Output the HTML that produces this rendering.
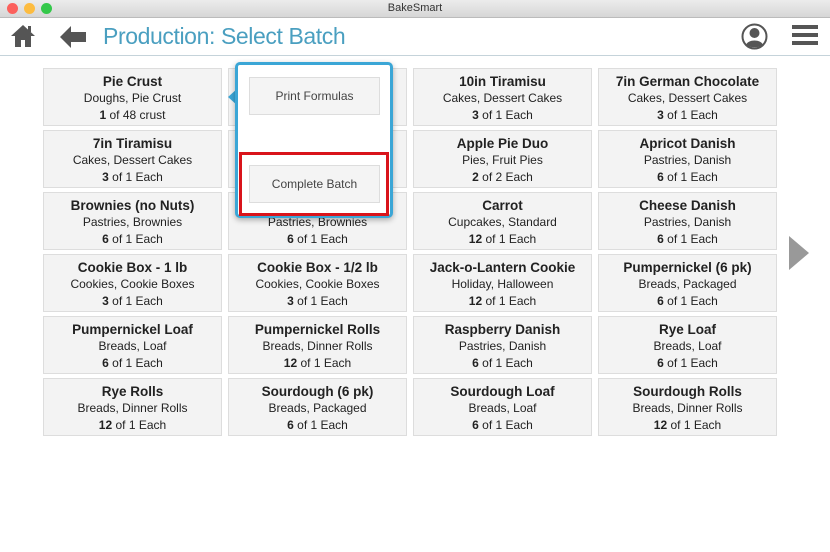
<!DOCTYPE html><html><head><style>
body{margin:0;width:830px;height:552px;background:#fff;font-family:"Liberation Sans",sans-serif;position:relative;overflow:hidden}
.tb{position:absolute;left:0;top:0;width:830px;height:17px;background:linear-gradient(#ececec,#d6d6d6);border-bottom:1px solid #bbb;text-align:center;font-size:11px;line-height:17px;color:#333}
.dot{position:absolute;top:3px;width:11px;height:11px;border-radius:50%}
.hdr{position:absolute;top:18px;left:0;width:830px;height:37px;border-bottom:1px solid #c5d3da}
.title{position:absolute;left:103px;top:5px;font-size:23px;color:#4a9fc0;letter-spacing:-0.4px}
.c{position:absolute;width:177px;height:56px;background:#f3f3f3;border:1px solid #ddd;text-align:center;color:#222;font-size:12px;line-height:17px}
.c b{display:block;font-size:13.5px;margin-top:4px;line-height:17px}
.pop{position:absolute;left:235px;top:62px;width:152px;height:150px;background:#fff;border:3px solid #3ba6d6;border-radius:5px;box-shadow:0 2px 6px rgba(0,0,0,.3)}
.btn{position:absolute;width:129px;height:36px;background:#f4f4f4;border:1px solid #ddd;font-size:12px;color:#444;text-align:center;line-height:36px}
</style></head><body>
<div class="tb">BakeSmart
<div class="dot" style="left:7px;background:#fc605c"></div><div class="dot" style="left:24px;background:#fdbc40"></div><div class="dot" style="left:41px;background:#34c84a"></div></div>
<div class="hdr">
<svg style="position:absolute;left:10px;top:6px" width="26" height="24" viewBox="0 0 26 24"><path d="M13 1L1 12h4v11h6v-7h4v7h6V12h4z" fill="#555"/><rect x="18" y="2" width="3" height="6" fill="#555"/></svg>
<svg style="position:absolute;left:60px;top:8px" width="26" height="22" viewBox="0 0 26 22"><path d="M0 11L11 0v6h15v10H11v6z" fill="#555"/></svg>
<div class="title">Production: Select Batch</div>
<svg style="position:absolute;left:741px;top:5px" width="27" height="27" viewBox="0 0 27 27"><circle cx="13.5" cy="13.5" r="12" fill="#fff" stroke="#555" stroke-width="2"/><circle cx="13.5" cy="10" r="5" fill="#555"/><path d="M5 22c2-6 15-6 17 0c-4 3-13 3-17 0z" fill="#555"/></svg>
<div style="position:absolute;left:792px;top:7px;width:26px;height:4px;background:#555;box-shadow:0 8px 0 #555,0 16px 0 #555"></div>
</div>
<svg style="position:absolute;left:789px;top:236px" width="20" height="34"><path d="M0 0L20 17L0 34z" fill="#999"/></svg>
<div class="c" style="left:43px;top:68px"><b>Pie Crust</b>Doughs, Pie Crust<br><strong>1</strong> of 48 crust</div>
<div class="c" style="left:228px;top:68px"></div>
<div class="c" style="left:413px;top:68px"><b>10in Tiramisu</b>Cakes, Dessert Cakes<br><strong>3</strong> of 1 Each</div>
<div class="c" style="left:598px;top:68px"><b>7in German Chocolate</b>Cakes, Dessert Cakes<br><strong>3</strong> of 1 Each</div>
<div class="c" style="left:43px;top:130px"><b>7in Tiramisu</b>Cakes, Dessert Cakes<br><strong>3</strong> of 1 Each</div>
<div class="c" style="left:228px;top:130px"></div>
<div class="c" style="left:413px;top:130px"><b>Apple Pie Duo</b>Pies, Fruit Pies<br><strong>2</strong> of 2 Each</div>
<div class="c" style="left:598px;top:130px"><b>Apricot Danish</b>Pastries, Danish<br><strong>6</strong> of 1 Each</div>
<div class="c" style="left:43px;top:192px"><b>Brownies (no Nuts)</b>Pastries, Brownies<br><strong>6</strong> of 1 Each</div>
<div class="c" style="left:228px;top:192px"><b>&nbsp;</b>Pastries, Brownies<br><strong>6</strong> of 1 Each</div>
<div class="c" style="left:413px;top:192px"><b>Carrot</b>Cupcakes, Standard<br><strong>12</strong> of 1 Each</div>
<div class="c" style="left:598px;top:192px"><b>Cheese Danish</b>Pastries, Danish<br><strong>6</strong> of 1 Each</div>
<div class="c" style="left:43px;top:254px"><b>Cookie Box - 1 lb</b>Cookies, Cookie Boxes<br><strong>3</strong> of 1 Each</div>
<div class="c" style="left:228px;top:254px"><b>Cookie Box - 1/2 lb</b>Cookies, Cookie Boxes<br><strong>3</strong> of 1 Each</div>
<div class="c" style="left:413px;top:254px"><b>Jack-o-Lantern Cookie</b>Holiday, Halloween<br><strong>12</strong> of 1 Each</div>
<div class="c" style="left:598px;top:254px"><b>Pumpernickel (6 pk)</b>Breads, Packaged<br><strong>6</strong> of 1 Each</div>
<div class="c" style="left:43px;top:316px"><b>Pumpernickel Loaf</b>Breads, Loaf<br><strong>6</strong> of 1 Each</div>
<div class="c" style="left:228px;top:316px"><b>Pumpernickel Rolls</b>Breads, Dinner Rolls<br><strong>12</strong> of 1 Each</div>
<div class="c" style="left:413px;top:316px"><b>Raspberry Danish</b>Pastries, Danish<br><strong>6</strong> of 1 Each</div>
<div class="c" style="left:598px;top:316px"><b>Rye Loaf</b>Breads, Loaf<br><strong>6</strong> of 1 Each</div>
<div class="c" style="left:43px;top:378px"><b>Rye Rolls</b>Breads, Dinner Rolls<br><strong>12</strong> of 1 Each</div>
<div class="c" style="left:228px;top:378px"><b>Sourdough (6 pk)</b>Breads, Packaged<br><strong>6</strong> of 1 Each</div>
<div class="c" style="left:413px;top:378px"><b>Sourdough Loaf</b>Breads, Loaf<br><strong>6</strong> of 1 Each</div>
<div class="c" style="left:598px;top:378px"><b>Sourdough Rolls</b>Breads, Dinner Rolls<br><strong>12</strong> of 1 Each</div>
<svg style="position:absolute;left:226px;top:88px" width="12" height="18"><path d="M12 0L2 9L12 18z" fill="#3ba6d6"/></svg>
<div class="pop"></div>
<div class="btn" style="left:249px;top:77px">Print Formulas</div>
<div style="position:absolute;left:239px;top:152px;width:144px;height:58px;border:3px solid #d9141b"></div>
<div class="btn" style="left:249px;top:165px">Complete Batch</div>
</body></html>
